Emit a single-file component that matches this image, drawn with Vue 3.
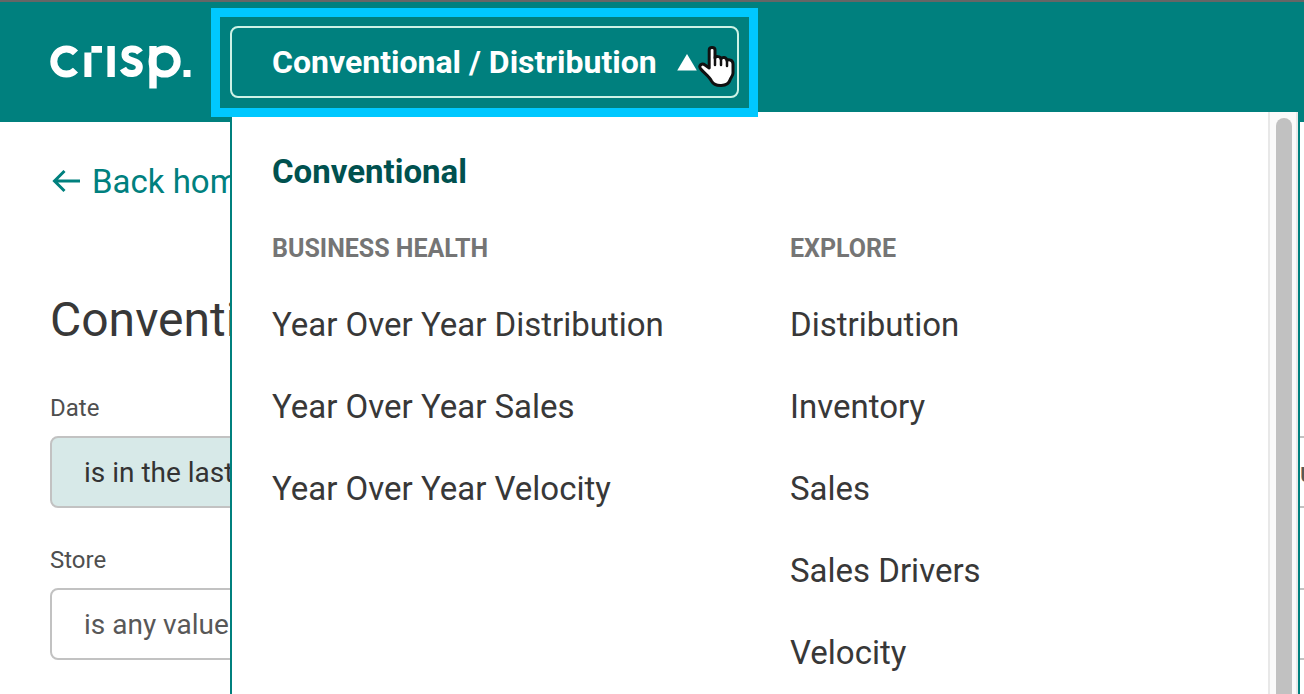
<template>
    <div class="page">
        <header class="topbar">
            <a class="logo" href="#" aria-label="crisp.">
                <svg width="142" height="47" viewBox="0 0 142 47">
                    <g fill="none" stroke="#fff" stroke-width="7">
                        <path d="M25.5 10.8 A12.6 12.6 0 1 0 25.5 28.2" />
                        <path d="M90 10.5 C86.5 5.500 75 5.500 75 12.5 C75 20.5 89.300 17 89.300 25 C89.300 33 77 34 73 26.500" />
                        <circle cx="114.600" cy="19.500" r="12.600" />
                    </g>
                    <path fill="#fff" d="M34.400 10.500h7v24.500h-7zM41.400 4h10.600v6.800h-10.600zM57.400 4h7.400v31h-7.400zM99.300 4h7.400v42.500h-7.400zM133.500 28h7v7h-7z" />
                </svg>
            </a>
            <div class="highlight">
                <button class="nav-button" type="button" aria-expanded="true">
                    <span>Conventional / Distribution</span>
                    <svg class="caret" width="20" height="17" viewBox="0 0 20 17">
                        <path d="M10 0 L19.800 16.500 H0.200 Z" fill="#fff" />
                    </svg>
                </button>
            </div>
        </header>

        <main class="content">
            <a class="back" href="#">
                <svg width="28" height="24" viewBox="0 0 28 24">
                    <path d="M12.500 1 L2.500 11 L12.500 21 M2.500 11 H28" fill="none" stroke="#00807e" stroke-width="3" />
                </svg>
                <span>Back home</span>
            </a>
            <h1>Conventional</h1>
            <div v-for="filter in filters" :key="filter.id" class="filter">
                <label :for="filter.id">{{ filter.label }}</label>
                <div class="filter-row">
                    <select :id="filter.id" :class="{ active: filter.active }">
                        <option>{{ filter.value }}</option>
                    </select>
                    <select class="unit" :aria-label="filter.label + ' unit'">
                        <option>{{ filter.unit }}</option>
                    </select>
                </div>
            </div>
        </main>

        <nav class="menu">
            <div class="menu-body">
                <h2>Conventional</h2>
                <div class="menu-columns">
                    <section v-for="group in groups" :key="group.title">
                        <h3>{{ group.title }}</h3>
                        <ul>
                            <li v-for="item in group.items" :key="item">
                                <a href="#">{{ item }}</a>
                            </li>
                        </ul>
                    </section>
                </div>
            </div>
            <div class="scroll-track">
                <div class="scroll-thumb"></div>
            </div>
        </nav>

        <svg class="pointer" width="40" height="46" viewBox="0 0 40 46">
            <path d="M11.200 24 V6 C11.200 2.500 17 2.500 17 6 V14 C17.500 12 22.500 12 23 15 C24 12.500 28.500 13 29 16.500 C30.500 15 35 16 35 20 V29 C35 32 33 33 32 36 C30 43 17 43.500 13.500 37 C11 32 6 29 2.800 25 C0 21.500 4 18.500 7 21 Z" fill="#fff" stroke="#111" stroke-width="3" stroke-linejoin="round" />
            <path d="M17 13 V21 M23 14 V21 M29 16 V22" stroke="#111" stroke-width="2.500" stroke-linecap="round" />
        </svg>
    </div>
</template>

<script setup>
const filters = [
    { id: 'date', label: 'Date', value: 'is in the last', unit: 'units', active: true },
    { id: 'store', label: 'Store', value: 'is any value', unit: '', active: false }
];

const groups = [
    {
        title: 'BUSINESS HEALTH',
        items: ['Year Over Year Distribution', 'Year Over Year Sales', 'Year Over Year Velocity']
    },
    {
        title: 'EXPLORE',
        items: ['Distribution', 'Inventory', 'Sales', 'Sales Drivers', 'Velocity']
    }
];
</script>

<style>
body {
    margin: 0;
    background: #fff;
}
</style>

<style scoped>
.page {
    position: relative;
    height: 100vh;
    overflow: hidden;
    font-family: Roboto, "Liberation Sans", sans-serif;
    color: #383838;
}
a {
    color: inherit;
    text-decoration: none;
}
.topbar {
    display: flex;
    align-items: flex-start;
    gap: 19px;
    height: 120px;
    padding-left: 50px;
    border-top: 2px solid #666;
    background: #00807e;
}
.logo {
    padding-top: 40px;
}
.logo svg {
    display: block;
}
.highlight {
    position: relative;
    z-index: 2;
    margin-top: 6px;
    padding: 9px 10px 10px;
    border: 9px solid #00c8ff;
    background: #00807e;
}
.nav-button {
    display: flex;
    align-items: center;
    gap: 20px;
    height: 72px;
    padding: 0 40px;
    border: 2px solid #cdf2e6;
    border-radius: 8px;
    background: transparent;
    color: #fff;
    font-family: inherit;
    font-size: 32px;
    font-weight: 700;
}
.content {
    padding: 40px 0 0 50px;
}
.back {
    display: flex;
    align-items: center;
    gap: 12px;
    padding-left: 2px;
    color: #00807e;
    font-size: 33px;
    line-height: 40px;
}
h1 {
    margin: 88px 0 42px;
    font-size: 48px;
    font-weight: 400;
    line-height: 60px;
    white-space: nowrap;
}
.filter {
    margin-bottom: 36px;
}
.filter label {
    display: block;
    margin-bottom: 12px;
    color: #4f4f4f;
    font-size: 24px;
    line-height: 32px;
}
.filter-row {
    display: grid;
    grid-template-columns: 1fr 38px;
    gap: 20px;
}
.filter select {
    box-sizing: border-box;
    height: 72px;
    padding: 0 32px;
    border: 2px solid #c2c2c2;
    border-radius: 8px;
    appearance: none;
    background: #fff;
    color: #585858;
    font-family: inherit;
    font-size: 28px;
}
.filter select.active {
    background: #d7e9e8;
    color: #333;
}
.filter .unit {
    width: 200px;
    font-weight: 700;
}
.menu {
    position: absolute;
    z-index: 1;
    top: 112px;
    right: 4px;
    bottom: 0;
    left: 230px;
    display: flex;
    border: solid #00807e;
    border-width: 0 2px;
    background: #fff;
}
.menu-body {
    flex: 1;
    padding: 40px 0 0 40px;
}
h2 {
    margin: 0;
    color: #00514f;
    font-size: 33px;
    font-weight: 700;
    line-height: 40px;
}
.menu-columns {
    display: grid;
    grid-template-columns: 1fr 1fr;
    gap: 40px;
}
h3 {
    margin: 41px 0 19px;
    color: #757575;
    font-size: 25px;
    font-weight: 700;
    line-height: 32px;
}
ul {
    margin: 0;
    padding: 0;
    list-style: none;
}
li {
    font-size: 33px;
    line-height: 82px;
    white-space: nowrap;
}
.scroll-track {
    display: flex;
    padding: 6px 4px 0 6px;
    border: solid #e8e8e8;
    border-width: 0 2px;
    background: #fafafa;
}
.scroll-thumb {
    width: 16px;
    border-radius: 8px 8px 0 0;
    background: #c1c1c1;
}
.pointer {
    position: absolute;
    z-index: 3;
    top: 44px;
    left: 698px;
}
</style>
